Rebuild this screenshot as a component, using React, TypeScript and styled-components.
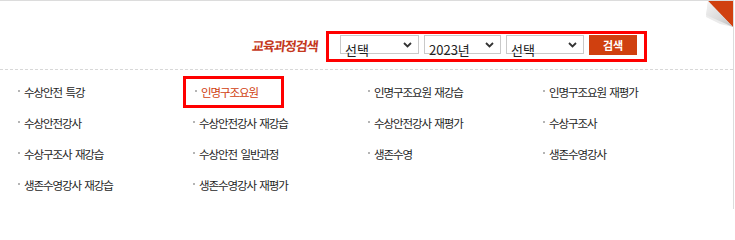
import styled, { createGlobalStyle } from "styled-components";

const GlobalStyle = createGlobalStyle`
  html, body {
    margin: 0;
    padding: 0;
    background: #fff;
  }
  body {
    font-family: "Noto Sans CJK KR", "Noto Sans", sans-serif;
  }
`;

const StyledPanel = styled.div`
  position: relative;
  width: 734px;
  height: 209px;
  border-top: 1px solid #dcdcdc;
  border-right: 1px solid #dcdcdc;
  box-sizing: border-box;
  background: #fff;
`;

const StyledHeader = styled.div`
  display: flex;
  justify-content: flex-end;
  align-items: flex-start;
  gap: 8px;
  height: 69px;
  padding: 30px 86px 0 0;
  box-sizing: border-box;
  border-bottom: 1px dashed #d8d8d8;
`;

const StyledTitle = styled.span`
  color: #c4381c;
  font-family: "Noto Sans CJK KR", sans-serif;
  font-size: 13px;
  line-height: 20px;
  font-weight: 700;
  letter-spacing: -1px;
  margin-top: 5px;
  transform: skewX(-6deg);
`;

const StyledSearchBox = styled.form`
  display: flex;
  align-items: flex-start;
  gap: 5px;
  height: 31px;
  box-sizing: border-box;
  border: 3px solid #ff0000;
  padding: 1px 7px 5px 11px;
`;

const StyledSelectWrap = styled.div<{ $w: number }>`
  position: relative;
  width: ${(p) => p.$w}px;
  height: 19px;
  box-sizing: border-box;
  border: 1px solid #c9c9c9;
  background: #fff;
`;

const StyledSelect = styled.select`
  appearance: none;
  width: 100%;
  height: 100%;
  border: none;
  outline: none;
  background: transparent;
  padding: 0 0 0 4px;
  font-family: "Noto Sans CJK KR", sans-serif;
  font-size: 13px;
  line-height: 17px;
  color: #222;
`;

const StyledChevron = styled.svg`
  position: absolute;
  right: 6px;
  top: 6px;
  width: 9px;
  height: 6px;
  pointer-events: none;
`;

const StyledButton = styled.button`
  width: 48px;
  height: 20px;
  border: none;
  background: #d0400f;
  color: #fff;
  font-family: "Noto Sans CJK KR", sans-serif;
  font-size: 11px;
  font-weight: 700;
  padding: 0;
  cursor: pointer;
`;

const StyledList = styled.ul`
  list-style: none;
  margin: 0;
  padding: 6px 0 0 18px;
  display: grid;
  grid-template-columns: repeat(4, 175px);
  grid-auto-rows: 31px;
`;

const StyledItem = styled.li`
  display: flex;
  align-items: center;
`;

const StyledLink = styled.a<{ $active?: boolean }>`
  display: flex;
  align-items: center;
  gap: 4px;
  height: 32px;
  box-sizing: border-box;
  text-decoration: none;
  font-family: "Noto Sans CJK KR", sans-serif;
  font-size: 11.5px;
  letter-spacing: -1.1px;
  word-spacing: 2px;
  color: ${(p) => (p.$active ? "#d0400f" : "#1e1e1e")};
  ${(p) =>
    p.$active
      ? `
    border: 3px solid #ff0000;
    width: 101px;
    margin-left: -10px;
    padding-left: 9px;
  `
      : ""}
`;

const StyledBullet = styled.span`
  width: 2px;
  height: 2px;
  background: #b5b5b5;
  flex-shrink: 0;
  margin-top: -2px;
`;

const StyledCorner = styled.svg`
  position: absolute;
  top: 0;
  right: 0;
  width: 30px;
  height: 28px;
`;

const courses = [
  "수상안전 특강",
  "인명구조요원",
  "인명구조요원 재강습",
  "인명구조요원 재평가",
  "수상안전강사",
  "수상안전강사 재강습",
  "수상안전강사 재평가",
  "수상구조사",
  "수상구조사 재강습",
  "수상안전 일반과정",
  "생존수영",
  "생존수영강사",
  "생존수영강사 재강습",
  "생존수영강사 재평가",
];

const Chevron = () => (
  <StyledChevron viewBox="0 0 9 6">
    <path d="M1 1 L4.5 4.5 L8 1" fill="none" stroke="#333" strokeWidth="1.8" />
  </StyledChevron>
);

const App = () => {
  return (
    <>
      <GlobalStyle />
      <StyledPanel>
        <StyledHeader>
          <StyledTitle>교육과정검색</StyledTitle>
          <StyledSearchBox onSubmit={(e) => e.preventDefault()}>
            <StyledSelectWrap $w={79}>
              <StyledSelect defaultValue="">
                <option value="">선택</option>
              </StyledSelect>
              <Chevron />
            </StyledSelectWrap>
            <StyledSelectWrap $w={77}>
              <StyledSelect defaultValue="2023">
                <option value="2023">2023년</option>
              </StyledSelect>
              <Chevron />
            </StyledSelectWrap>
            <StyledSelectWrap $w={78}>
              <StyledSelect defaultValue="">
                <option value="">선택</option>
              </StyledSelect>
              <Chevron />
            </StyledSelectWrap>
            <StyledButton type="submit">검색</StyledButton>
          </StyledSearchBox>
        </StyledHeader>
        <StyledList>
          {courses.map((name, i) => (
            <StyledItem key={name}>
              <StyledLink href="#" $active={i === 1}>
                <StyledBullet />
                {name}
              </StyledLink>
            </StyledItem>
          ))}
        </StyledList>
        <StyledCorner viewBox="0 0 30 28">
          <defs>
            <linearGradient id="fold" x1="0" y1="0" x2="1" y2="1">
              <stop offset="0" stopColor="#f4f4f4" />
              <stop offset="0.6" stopColor="#d9d9d9" />
              <stop offset="1" stopColor="#bdbdbd" />
            </linearGradient>
          </defs>
          <polygon points="5,0 30,0 30,26" fill="#d0400f" />
          <polygon points="3,16 5,0 30,26 17,23" fill="#000" opacity="0.08" />
          <polygon points="5,0 30,26 3,14" fill="url(#fold)" />
        </StyledCorner>
      </StyledPanel>
    </>
  );
};

export default App;
